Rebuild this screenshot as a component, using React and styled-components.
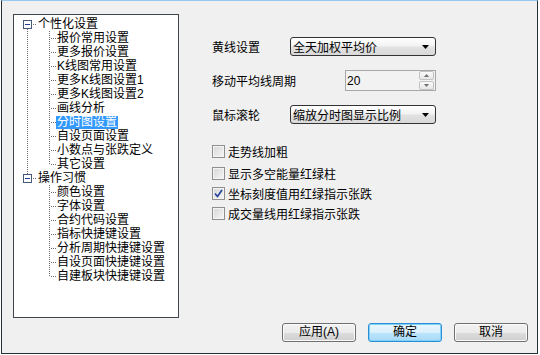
import React from 'react';
import styled, { createGlobalStyle } from 'styled-components';

const GlobalStyle = createGlobalStyle`
  html, body {
    margin: 0;
    padding: 0;
    background: #ffffff;
  }
  body {
    font-family: "Liberation Sans", "Noto Sans CJK SC", sans-serif;
    font-size: 12px;
    color: #000;
  }
`;

const tree = [
  {
    label: '个性化设置',
    children: [
      '报价常用设置',
      '更多报价设置',
      'K线图常用设置',
      '更多K线图设置1',
      '更多K线图设置2',
      '画线分析',
      '分时图设置',
      '自设页面设置',
      '小数点与张跌定义',
      '其它设置',
    ],
  },
  {
    label: '操作习惯',
    children: [
      '颜色设置',
      '字体设置',
      '合约代码设置',
      '指标快捷键设置',
      '分析周期快捷键设置',
      '自设页面快捷键设置',
      '自建板块快捷键设置',
    ],
  },
];

const checks = [
  { label: '走势线加粗', checked: false },
  { label: '显示多空能量红绿柱', checked: false },
  { label: '坐标刻度值用红绿指示张跌', checked: true },
  { label: '成交量线用红绿指示张跌', checked: false },
];

const Window = styled.div`
  box-sizing: border-box;
  width: 537px;
  height: 354px;
  margin-left: 1px;
  background: #f0f0f0;
  border: 1px solid #26303a;
  border-top: 1px solid #99c9ef;
  display: flex;
  flex-direction: column;
`;

const Body = styled.div`
  display: flex;
  padding: 13px 0 0 11px;
`;

const TreeBox = styled.div`
  box-sizing: border-box;
  width: 166px;
  height: 304px;
  background: #fff;
  border: 1px solid #40464e;
  padding-top: 2px;
  overflow: hidden;
`;

const TreeRow = styled.div`
  display: flex;
  align-items: center;
  height: 14px;
  line-height: 14px;
  white-space: nowrap;
`;

const Guide = styled.svg`
  flex: none;
  display: block;
`;

const NodeLabel = styled.span`
  padding: 0 1px;
  margin-left: -1px;
  line-height: 13px;
  background: ${({ $selected }) => ($selected ? '#3399ff' : 'transparent')};
  color: ${({ $selected }) => ($selected ? '#fff' : '#000')};
`;

const Settings = styled.div`
  margin-left: 33px;
  padding-top: 23px;
  display: flex;
  flex-direction: column;
`;

const FieldRow = styled.div`
  display: flex;
  align-items: center;
  height: ${({ $h }) => $h}px;
  margin-top: ${({ $gap }) => $gap || 0}px;
`;

const FieldLabel = styled.div`
  width: 78px;
  flex: none;
  white-space: nowrap;
`;

const Select = styled.div`
  box-sizing: border-box;
  width: 146px;
  height: 19px;
  border: 1px solid #333;
  border-radius: 3px;
  background: linear-gradient(#ffffff, #f3f3f3 45%, #e2e2e2 55%, #d8d8d8);
  display: flex;
  align-items: center;
  justify-content: space-between;
  padding: 0 6px 0 2px;
  white-space: nowrap;
`;

const Spinner = styled.div`
  box-sizing: border-box;
  width: 91px;
  height: 21px;
  margin-left: 55px;
  border: 1px solid #a5a7ab;
  background: #f2f2f2;
  display: flex;
  align-items: center;
  justify-content: space-between;
  padding: 0 1px 0 1px;
`;

const SpinButtons = styled.div`
  display: flex;
  flex-direction: column;
  gap: 1px;
`;

const SpinButton = styled.div`
  box-sizing: border-box;
  width: 15px;
  height: 9px;
  border: 1px solid #c3c3c3;
  border-radius: 2px;
  background: linear-gradient(#fafafa, #e6e6e6);
  display: flex;
  align-items: center;
  justify-content: center;
`;

const CheckRow = styled.div`
  display: flex;
  align-items: center;
  height: 20px;
  margin-top: ${({ $gap }) => $gap}px;
  gap: 3px;
  white-space: nowrap;
`;

const CheckBox = styled.div`
  box-sizing: border-box;
  width: 13px;
  height: 13px;
  border: 1px solid #8f8f8f;
  background: linear-gradient(135deg, #d6d6d6, #f6f6f6);
  box-shadow: inset 0 0 0 1px #f4f4f4;
  display: flex;
  align-items: center;
  justify-content: center;
`;

const Footer = styled.div`
  display: flex;
  justify-content: flex-end;
  gap: 12px;
  padding: 5px 9px 0 0;
`;

const Button = styled.div`
  box-sizing: border-box;
  width: 74px;
  height: 19px;
  border: 1px solid ${({ $primary }) => ($primary ? '#2b8fd8' : '#6f6f6f')};
  border-radius: 3px;
  background: ${({ $primary }) =>
    $primary
      ? 'linear-gradient(#eaf6fd, #d9f0fc 50%, #bee6fd 50%, #a7d9f5)'
      : 'linear-gradient(#f2f2f2, #ebebeb 50%, #dddddd 50%, #cfcfcf)'};
  box-shadow: inset 0 0 0 1px ${({ $primary }) => ($primary ? '#7fd0f7' : '#fbfbfb')};
  display: flex;
  align-items: center;
  justify-content: center;
  line-height: 17px;
  white-space: nowrap;
`;

const dot = { stroke: '#6d6d6d', strokeWidth: 1, strokeDasharray: '1 1' };

const RootGuide = ({ first }) => (
  <Guide width="24" height="14">
    {first ? (
      <line x1="13.5" y1="12" x2="13.5" y2="14" {...dot} />
    ) : (
      <line x1="13.5" y1="0" x2="13.5" y2="4" {...dot} />
    )}
    <line x1="19" y1="7.5" x2="23" y2="7.5" {...dot} />
    <rect x="9.5" y="3.5" width="8" height="8" fill="#fff" stroke="#445a78" />
    <line x1="11" y1="7.5" x2="16" y2="7.5" stroke="#1c3c9c" />
  </Guide>
);

const ChildGuide = ({ trunk, last }) => (
  <Guide width="43" height="14">
    {trunk && <line x1="13.5" y1="0" x2="13.5" y2="14" {...dot} />}
    <line x1="35.5" y1="0" x2="35.5" y2={last ? 8 : 14} {...dot} />
    <line x1="37" y1="7.5" x2="43" y2="7.5" {...dot} />
  </Guide>
);

const Arrow = () => (
  <svg width="7" height="4">
    <polygon points="0,0 7,0 3.5,4" fill="#000" />
  </svg>
);

const SmallArrow = ({ up }) => (
  <svg width="5" height="3">
    <polygon points={up ? '0,3 5,3 2.5,0' : '0,0 5,0 2.5,3'} fill="#707070" />
  </svg>
);

const Tick = () => (
  <svg width="9" height="9">
    <path d="M1 4.5 L3.5 7.5 L8 1" fill="none" stroke="#1f3f9a" strokeWidth="1.6" />
  </svg>
);

const App = () => {
  return (
    <>
      <GlobalStyle />
      <Window>
        <Body>
          <TreeBox>
            {tree.map((node, i) => (
              <React.Fragment key={node.label}>
                <TreeRow>
                  <RootGuide first={i === 0} />
                  <NodeLabel>{node.label}</NodeLabel>
                </TreeRow>
                {node.children.map((child, j) => (
                  <TreeRow key={child}>
                    <ChildGuide trunk={i < tree.length - 1} last={j === node.children.length - 1} />
                    <NodeLabel $selected={child === '分时图设置'}>{child}</NodeLabel>
                  </TreeRow>
                ))}
              </React.Fragment>
            ))}
          </TreeBox>

          <Settings>
            <FieldRow $h={19}>
              <FieldLabel>黄线设置</FieldLabel>
              <Select>
                <span>全天加权平均价</span>
                <Arrow />
              </Select>
            </FieldRow>
            <FieldRow $h={21} $gap={14}>
              <FieldLabel>移动平均线周期</FieldLabel>
              <Spinner>
                <span>20</span>
                <SpinButtons>
                  <SpinButton>
                    <SmallArrow up />
                  </SpinButton>
                  <SpinButton>
                    <SmallArrow />
                  </SpinButton>
                </SpinButtons>
              </Spinner>
            </FieldRow>
            <FieldRow $h={19} $gap={14}>
              <FieldLabel>鼠标滚轮</FieldLabel>
              <Select>
                <span>缩放分时图显示比例</span>
                <Arrow />
              </Select>
            </FieldRow>
            {checks.map((c, i) => (
              <CheckRow key={c.label} $gap={i === 0 ? 17 : i === 1 ? 2 : 0}>
                <CheckBox>{c.checked && <Tick />}</CheckBox>
                <span>{c.label}</span>
              </CheckRow>
            ))}
          </Settings>
        </Body>

        <Footer>
          <Button>应用(A)</Button>
          <Button $primary>确定</Button>
          <Button>取消</Button>
        </Footer>
      </Window>
    </>
  );
};

export default App;
